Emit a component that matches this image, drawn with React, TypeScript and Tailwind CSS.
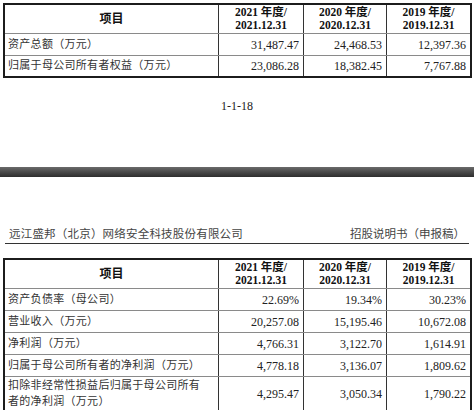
import React from "react";

const serif = { fontFamily: '"Liberation Serif", "Noto Sans CJK SC", serif' } as const;

type Row = { label: React.ReactNode; vals: string[]; h: number };

function Table({ rows, tail }: { rows: Row[]; tail?: boolean }) {
  const years = ["2021", "2020", "2019"];
  return (
    <div
      className={`ml-[3px] w-[469px] border-2 border-[#1c1c1c] ${tail ? "border-b-0" : ""}`}
      style={serif}
    >
      <div className="grid grid-cols-[214px_85px_83px_1fr] h-[28px]">
        <div className="flex items-center justify-center border-r border-[#333] text-[12px] font-bold text-[#111]">
          项目
        </div>
        {years.map((y, i) => (
          <div
            key={y}
            className={`flex flex-col items-center justify-center text-[11.5px] font-bold leading-[13px] text-[#111] ${i < 2 ? "border-r border-[#333]" : ""}`}
          >
            <span>{y} 年度/</span>
            <span>{y}.12.31</span>
          </div>
        ))}
      </div>
      {rows.map((r, idx) => (
        <div
          key={idx}
          className="grid grid-cols-[214px_85px_83px_1fr] border-t border-[#8a8a8a]"
          style={{ height: r.h }}
        >
          <div className="flex items-center border-r border-[#333] pl-[3px] text-[11px] leading-[15.5px] tracking-[0.3px] text-[#333]">
            {r.label}
          </div>
          {r.vals.map((v, i) => (
            <div
              key={i}
              className={`flex items-center justify-end pr-[4px] text-[12px] text-[#222] ${i < 2 ? "border-r border-[#333]" : ""}`}
            >
              {v}
            </div>
          ))}
        </div>
      ))}
    </div>
  );
}

export default function App() {
  return (
    <div className="w-[474px] h-[410px] overflow-hidden bg-white">
      <div className="h-[3px]" />
      <Table
        rows={[
          { label: "资产总额（万元）", vals: ["31,487.47", "24,468.53", "12,397.36"], h: 22 },
          { label: "归属于母公司所有者权益（万元）", vals: ["23,086.28", "18,382.45", "7,767.88"], h: 21 },
        ]}
      />
      <div className="h-[21px]" />
      <div className="text-center text-[12px] leading-[14px] text-[#222]" style={serif}>
        1-1-18
      </div>
      <div className="h-[54px]" />
      <div className="h-[10px] bg-gradient-to-b from-[#6a6a6a] via-[#4a4a4a] to-[#2e2e2e]" />
      <div className="h-[50px]" />
      <div
        className="mx-[5px] flex items-end justify-between border-b border-[#333] px-[4px] pb-[2px] text-[11.5px] leading-[14px] text-[#444]"
        style={serif}
      >
        <span className="tracking-[0.2px]">远江盛邦（北京）网络安全科技股份有限公司</span>
        <span>招股说明书（申报稿）</span>
      </div>
      <div className="h-[14px]" />
      <Table
        tail
        rows={[
          { label: "资产负债率（母公司）", vals: ["22.69%", "19.34%", "30.23%"], h: 22 },
          { label: "营业收入（万元）", vals: ["20,257.08", "15,195.46", "10,672.08"], h: 22 },
          { label: "净利润（万元）", vals: ["4,766.31", "3,122.70", "1,614.91"], h: 22 },
          { label: "归属于母公司所有者的净利润（万元）", vals: ["4,778.18", "3,136.07", "1,809.62"], h: 22 },
          {
            label: (
              <span>
                扣除非经常性损益后归属于母公司所有
                <br />
                者的净利润（万元）
              </span>
            ),
            vals: ["4,295.47", "3,050.34", "1,790.22"],
            h: 34,
          },
          { label: "", vals: ["", "", ""], h: 22 },
        ]}
      />
    </div>
  );
}
